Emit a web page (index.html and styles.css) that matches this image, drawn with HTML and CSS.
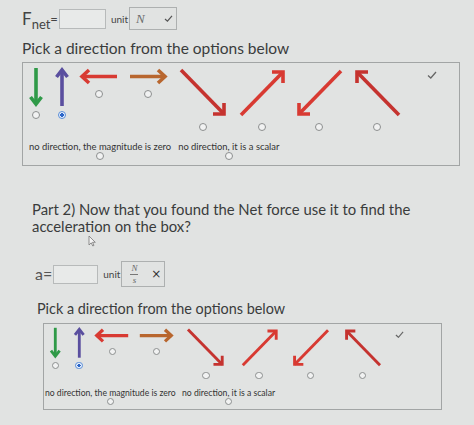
FILE: index.html
```html
<!DOCTYPE html>
<html lang="en">
<head>
<meta charset="utf-8">
<title>Net force</title>
<link rel="stylesheet" href="styles.css">
</head>
<body>
<main class="page">
  <section class="part">
    <div class="answer-row">
      <span class="var">F<sub>net</sub><span class="eq">=</span></span>
      <span class="blank"></span>
      <span class="unit-label">unit</span>
      <span class="unit-box"><i class="unit-n">N</i><svg class="tick" viewBox="0 0 10 8"><polyline points="1,4.5 3.8,7 9,1"/></svg></span>
    </div>
    <h2 class="prompt">Pick a direction from the options below</h2>
    <div class="choices">
      <div class="arrow-row">
        <div class="opt o-down"><svg class="sv-v arr c-green" viewBox="0 0 14 40"><line x1="7" y1="1" x2="7" y2="37"/><polyline points="1.5,30 7,37 12.5,30"/></svg><span class="radio"></span></div>
        <div class="opt o-up"><svg class="sv-v arr c-purple" viewBox="0 0 14 40"><line x1="7" y1="39" x2="7" y2="3"/><polyline points="1.5,10 7,3 12.5,10"/></svg><span class="radio on"></span></div>
        <div class="opt o-left"><svg class="sv-h arr c-red" viewBox="0 0 40 19"><line x1="38" y1="9.5" x2="3" y2="9.5"/><polyline points="10,3 3,9.5 10,16"/></svg><span class="radio"></span></div>
        <div class="opt o-right"><svg class="sv-h arr c-orange" viewBox="0 0 40 19"><line x1="2" y1="9.5" x2="37" y2="9.5"/><polyline points="30,3 37,9.5 30,16"/></svg><span class="radio"></span></div>
        <div class="opt o-dr"><svg class="sv-d arr c-dark" viewBox="0 0 50 52"><line x1="3" y1="3" x2="46" y2="47"/><polyline points="46,36 46,47 35,47"/></svg><span class="radio"></span></div>
        <div class="opt o-ur"><svg class="sv-d arr c-red" viewBox="0 0 50 52"><line x1="4" y1="48" x2="46" y2="5"/><polyline points="35,5 46,5 46,16"/></svg><span class="radio"></span></div>
        <div class="opt o-dl"><svg class="sv-d arr c-red" viewBox="0 0 50 52"><line x1="47" y1="4" x2="5" y2="47"/><polyline points="5,36 5,47 16,47"/></svg><span class="radio"></span></div>
        <div class="opt o-ul"><svg class="sv-d arr c-dark" viewBox="0 0 50 52"><line x1="47" y1="48" x2="5" y2="5"/><polyline points="16,5 5,5 5,16"/></svg><span class="radio"></span></div>
        <svg class="mark" viewBox="0 0 10 8"><polyline points="1,4.5 3.8,7 9,1"/></svg>
      </div>
      <div class="text-row">
        <div class="topt"><span>no direction, the magnitude is zero</span><span class="radio"></span></div>
        <div class="topt"><span>no direction, it is a scalar</span><span class="radio"></span></div>
      </div>
    </div>
  </section>

  <section class="part part-two">
    <p class="question">Part 2) Now that you found the Net force use it to find the acceleration on the box?</p>
    <svg class="cursor" viewBox="0 0 8 12"><path d="M1 1 L1 10 L3.2 7.8 L4.8 11 L6 10.4 L4.5 7.3 L7.3 7.3 Z"/></svg>
    <div class="answer-row a-row">
      <span class="var var-a">a=</span>
      <span class="blank blank-a"></span>
      <span class="unit-label">unit</span>
      <span class="unit-box unit-box-a"><span class="frac"><i class="num">N</i><i class="den">s</i></span><span class="cross">×</span></span>
    </div>
    <h2 class="prompt prompt-two">Pick a direction from the options below</h2>
    <div class="choices small">
      <div class="arrow-row">
        <div class="opt o-down"><svg class="sv-v arr c-green" viewBox="0 0 14 40"><line x1="7" y1="1" x2="7" y2="37"/><polyline points="1.5,30 7,37 12.5,30"/></svg><span class="radio"></span></div>
        <div class="opt o-up"><svg class="sv-v arr c-purple" viewBox="0 0 14 40"><line x1="7" y1="39" x2="7" y2="3"/><polyline points="1.5,10 7,3 12.5,10"/></svg><span class="radio on"></span></div>
        <div class="opt o-left"><svg class="sv-h arr c-red" viewBox="0 0 40 19"><line x1="38" y1="9.5" x2="3" y2="9.5"/><polyline points="10,3 3,9.5 10,16"/></svg><span class="radio"></span></div>
        <div class="opt o-right"><svg class="sv-h arr c-orange" viewBox="0 0 40 19"><line x1="2" y1="9.5" x2="37" y2="9.5"/><polyline points="30,3 37,9.5 30,16"/></svg><span class="radio"></span></div>
        <div class="opt o-dr"><svg class="sv-d arr c-dark" viewBox="0 0 50 52"><line x1="3" y1="3" x2="46" y2="47"/><polyline points="46,36 46,47 35,47"/></svg><span class="radio"></span></div>
        <div class="opt o-ur"><svg class="sv-d arr c-red" viewBox="0 0 50 52"><line x1="4" y1="48" x2="46" y2="5"/><polyline points="35,5 46,5 46,16"/></svg><span class="radio"></span></div>
        <div class="opt o-dl"><svg class="sv-d arr c-red" viewBox="0 0 50 52"><line x1="47" y1="4" x2="5" y2="47"/><polyline points="5,36 5,47 16,47"/></svg><span class="radio"></span></div>
        <div class="opt o-ul"><svg class="sv-d arr c-dark" viewBox="0 0 50 52"><line x1="47" y1="48" x2="5" y2="5"/><polyline points="16,5 5,5 5,16"/></svg><span class="radio"></span></div>
        <svg class="mark" viewBox="0 0 10 8"><polyline points="1,4.5 3.8,7 9,1"/></svg>
      </div>
      <div class="text-row">
        <div class="topt"><span>no direction, the magnitude is zero</span><span class="radio"></span></div>
        <div class="topt"><span>no direction, it is a scalar</span><span class="radio"></span></div>
      </div>
    </div>
  </section>
</main>
</body>
</html>
```

FILE: styles.css
```css
html, body {
  margin: 0;
  padding: 0;
}

body {
  background: #e1e3e2;
  font-family: Lato, "Open Sans", "Liberation Sans", sans-serif;
  color: #3a3c3c;
}

.page {
  width: 474px;
  height: 425px;
  box-sizing: border-box;
  padding: 7px 0 0 22px;
  overflow: hidden;
}

/* ---------- answer rows ---------- */
.answer-row {
  display: flex;
  align-items: center;
  height: 23px;
}

.var {
  font-size: 17px;
  line-height: 1;
  color: #444;
  display: flex;
  align-items: baseline;
}

.var sub {
  font-size: 13px;
  vertical-align: baseline;
  position: relative;
  top: 4px;
}

.eq {
  font-size: 13px;
  position: relative;
  top: -1px;
}

.blank {
  width: 47px;
  height: 20px;
  box-sizing: border-box;
  border: 1px solid #b7baba;
  background: #e8eae9;
  margin-left: 1px;
}

.unit-label {
  font-size: 10px;
  color: #444;
  margin: 0 1px 0 5px;
}

.unit-box {
  width: 48px;
  height: 23px;
  box-sizing: border-box;
  border: 1px solid #adb0b0;
  display: flex;
  align-items: center;
  justify-content: space-between;
  padding: 0 3px 0 6px;
}

.unit-n {
  font-family: "Liberation Serif", serif;
  font-style: italic;
  font-size: 13px;
  color: #6a6c6c;
}

.tick {
  width: 9px;
  height: 7px;
  fill: none;
  stroke: #555;
  stroke-width: 1.4;
}

/* ---------- prompts ---------- */
.prompt {
  font-size: 15.5px;
  font-weight: 400;
  line-height: 20px;
  margin: 8px 0 4px;
  color: #3a3c3c;
}

/* ---------- choice boxes ---------- */
.choices {
  width: 438px;
  box-sizing: border-box;
  border: 1px solid #a2a5a5;
  font-size: 10px;
  padding: 0.4em 0 0.5em 0;
}

.arrow-row {
  display: flex;
  align-items: flex-start;
}

.opt {
  display: flex;
  flex-direction: column;
  align-items: center;
  flex: none;
}

.opt svg {
  display: block;
}

.o-down  { width: 2.6em; }
.o-up    { width: 2.6em; }
.o-left  { width: 4.8em; }
.o-right { width: 5em; }
.o-dr    { width: 6em; }
.o-ur    { width: 5.8em; }
.o-dl    { width: 5.6em; }
.o-ul    { width: 6em; }

.sv-v { width: 1.4em; height: 4em; }
.sv-h { width: 4em; height: 1.9em; }
.sv-d { width: 5em; height: 5.2em; }

.arr {
  fill: none;
  stroke-width: 3.6;
  stroke-linecap: butt;
  stroke-linejoin: miter;
}

.c-green  { stroke: #2f9a48; }
.c-purple { stroke: #5a4f9f; }
.c-red    { stroke: #d83a32; }
.c-orange { stroke: #b8662e; }
.c-dark   { stroke: #c5332f; }

.radio {
  display: block;
  width: 0.8em;
  height: 0.8em;
  box-sizing: border-box;
  border-radius: 50%;
  border: 1px solid #8c8f8f;
  background: #f1f2f2;
  margin-top: 0.4em;
}

.radio.on {
  border-color: #5b8fd9;
  background: radial-gradient(circle, #2b66c9 0 38%, #e6eefa 46%);
}

.mark {
  width: 1em;
  height: 0.8em;
  margin: 0.4em 0 0 2em;
  fill: none;
  stroke: #666;
  stroke-width: 1.3;
}

.text-row {
  display: flex;
  gap: 0.7em;
  padding-left: 0.6em;
  margin-top: 0.95em;
}

.topt {
  display: flex;
  flex-direction: column;
  align-items: center;
  font-size: 0.94em;
  line-height: 1.17;
  color: #333;
  white-space: nowrap;
}

.topt .radio {
  width: 0.86em;
  height: 0.86em;
  margin-top: 0.05em;
}

/* ---------- part two ---------- */
.part-two {
  position: relative;
  padding-left: 10px;
  margin-top: 35px;
}

.question {
  width: 440px;
  font-size: 14.85px;
  line-height: 17px;
  margin: 0;
  color: #3a3c3c;
}

.cursor {
  position: absolute;
  left: 66px;
  top: 34px;
  width: 8px;
  height: 12px;
  fill: #f4f4f4;
  stroke: #777;
  stroke-width: 0.8;
}

.a-row {
  margin-top: 26px;
  padding-left: 3px;
  height: 26px;
}

.var-a {
  font-size: 16px;
  color: #555;
}

.blank-a {
  width: 45px;
  height: 19px;
}

.unit-box-a {
  width: 44px;
  height: 26px;
  padding: 0 3px 0 8px;
}

.frac {
  display: inline-flex;
  flex-direction: column;
  align-items: center;
  font-family: "Liberation Serif", serif;
  font-size: 9px;
  line-height: 1;
  color: #666;
}

.frac .num {
  padding: 0 1px 1px;
  border-bottom: 1px solid #777;
}

.frac .den {
  padding-top: 1px;
}

.cross {
  font-size: 12px;
  color: #333;
  font-family: "DejaVu Sans", sans-serif;
}

.prompt-two {
  font-size: 14.4px;
  line-height: 18px;
  margin: 13px 0 5px 5px;
}

.choices.small {
  width: 399px;
  margin-left: 11px;
  font-size: 9px;
  padding: 0.35em 0 0.45em 0;
}

.choices.small .sv-v { height: 3.5em; }
.choices.small .sv-d { height: 4.6em; }
.choices.small .mark { margin-left: 0.6em; }
.choices.small .text-row { padding-left: 0.1em; margin-top: 1em; }
.choices.small .topt { font-size: 0.96em; line-height: 1.1; }
.choices.small .topt .radio { margin-top: 0; }
```
